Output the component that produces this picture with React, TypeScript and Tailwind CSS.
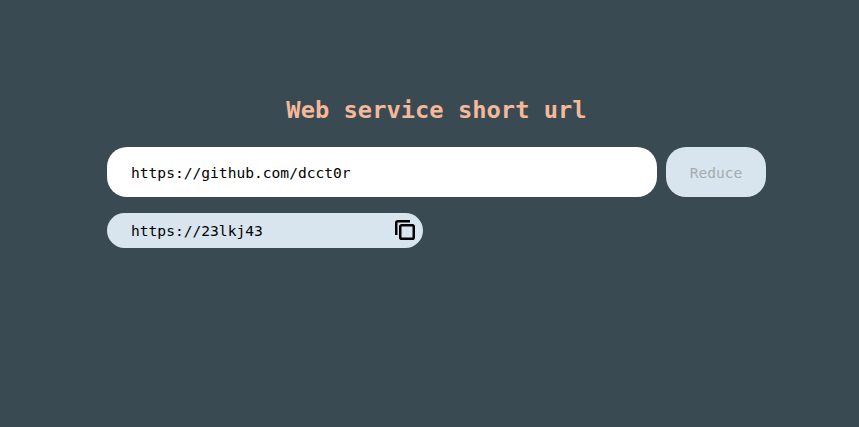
export default function App() {
  return (
    <div className="min-h-[427px] bg-[#3a4a52] flex justify-center pl-[14px] pt-[96px] font-['DejaVu_Sans_Mono',monospace]">
      <div className="w-[659px] flex flex-col">
        <h1 className="h-[28px] text-center text-[23.75px] leading-[28px] font-bold text-[#f4b89a]">
          Web service short url
        </h1>
        <div className="mt-[23px] flex gap-[9px]">
          <input
            readOnly
            value="https://github.com/dcct0r"
            className="w-[550px] h-[50px] rounded-[20px] bg-white pl-[24px] pt-[1px] text-[14.6px] text-black outline-none"
          />
          <button className="w-[100px] h-[50px] rounded-[20px] bg-[#d8e5ee] pt-[1px] text-[14.6px] text-[#a6abae]">
            Reduce
          </button>
        </div>
        <div className="mt-[16px] w-[316px] h-[35px] rounded-[17.5px] bg-[#d8e5ee] flex items-center justify-between pl-[24px] pr-[8px]">
          <span className="text-[14.6px] text-black">https://23lkj43</span>
          <svg width="20" height="20" viewBox="0 0 20 20" fill="none" stroke="#000" strokeWidth="2.5" className="-mt-[2px]">
            <rect x="5.25" y="5.25" width="13.5" height="13.5" rx="1.6" />
            <path d="M1.25 15V2.9a1.6 1.6 0 0 1 1.6-1.65H15" />
          </svg>
        </div>
      </div>
    </div>
  )
}
